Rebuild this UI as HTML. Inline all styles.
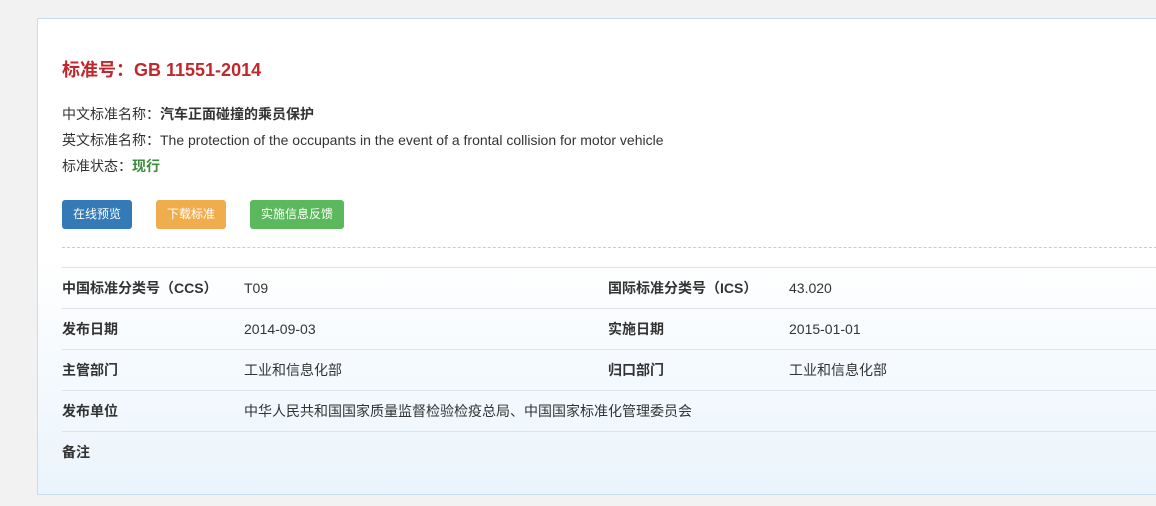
<!DOCTYPE html>
<html><head><meta charset="utf-8"><style>
body{margin:0;width:1156px;height:506px;background:#f2f2f2;font-family:"Liberation Sans","Noto Sans CJK SC",sans-serif;overflow:hidden;position:relative}
.box{position:absolute;left:37px;top:18px;width:1130px;height:475px;border:1px solid #c9dcec;background:linear-gradient(to bottom,#fff 0%,#fff 50%,#eaf4fc 100%)}
.t{position:absolute;left:24px;top:39px;font-size:18px;font-weight:bold;color:#c0282d;line-height:24px}
.l{position:absolute;left:24px;font-size:14px;color:#333;line-height:20px}
.btn{position:absolute;top:181px;height:29px;line-height:29px;color:#fff;font-size:12px;text-align:center;border-radius:3px}
.dash{position:absolute;left:24px;top:228px;width:1095px;border-top:1px dashed #ccc}
.row{position:absolute;left:24px;width:1095px;height:41px;border-top:1px solid #dde3e8;font-size:14px;color:#333}
.row span{position:absolute;top:0;line-height:40px}
.k{font-weight:bold}
</style></head><body>
<div class="box">
<div class="t">标准号：GB 11551-2014</div>
<div class="l" style="top:85px">中文标准名称：<b>汽车正面碰撞的乘员保护</b></div>
<div class="l" style="top:111px">英文标准名称：The protection of the occupants in the event of a frontal collision for motor vehicle</div>
<div class="l" style="top:137px">标准状态：<b style="color:#3c8a3c">现行</b></div>
<div class="btn" style="left:24px;width:70px;background:#337ab7">在线预览</div>
<div class="btn" style="left:118px;width:70px;background:#f0ad4e">下载标准</div>
<div class="btn" style="left:212px;width:94px;background:#5cb85c">实施信息反馈</div>
<div class="dash"></div>
<div class="row" style="top:248px"><span class="k" style="left:0">中国标准分类号（CCS）</span><span style="left:182px">T09</span><span class="k" style="left:546px">国际标准分类号（ICS）</span><span style="left:727px">43.020</span></div>
<div class="row" style="top:289px"><span class="k" style="left:0">发布日期</span><span style="left:182px">2014-09-03</span><span class="k" style="left:546px">实施日期</span><span style="left:727px">2015-01-01</span></div>
<div class="row" style="top:330px"><span class="k" style="left:0">主管部门</span><span style="left:182px">工业和信息化部</span><span class="k" style="left:546px">归口部门</span><span style="left:727px">工业和信息化部</span></div>
<div class="row" style="top:371px"><span class="k" style="left:0">发布单位</span><span style="left:182px">中华人民共和国国家质量监督检验检疫总局、中国国家标准化管理委员会</span></div>
<div class="row" style="top:412px"><span class="k" style="left:0">备注</span></div>
</div>
</body></html>
